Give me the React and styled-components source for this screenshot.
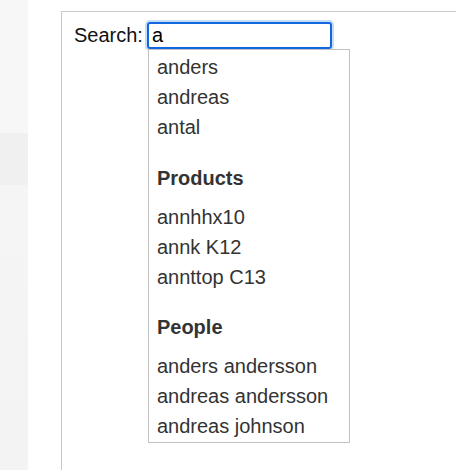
import React from "react";
import styled, { createGlobalStyle } from "styled-components";

const Global = createGlobalStyle`
  html, body { margin: 0; padding: 0; background: #fff; overflow: hidden; }
  body { font-family: "Liberation Sans", Arial, sans-serif; }
`;

const Page = styled.div`
  display: flex;
  width: 456px;
  height: 470px;
  overflow: hidden;
`;

const Sidebar = styled.div`
  width: 28px;
  flex: none;
  display: flex;
  flex-direction: column;
  background: linear-gradient(#f8f8f8, #f4f4f4);
`;

const SideBlock = styled.div`
  height: ${(p) => p.$h}px;
  background: ${(p) => p.$bg};
  flex: ${(p) => (p.$grow ? 1 : "none")};
`;

const Content = styled.div`
  flex: 1;
  padding: 11px 0 0 33px;
`;

const Panel = styled.div`
  width: 480px;
  height: 500px;
  border: 1px solid #c8c8c8;
  box-sizing: border-box;
  padding: 10px 0 0 12px;
`;

const Row = styled.div`
  display: flex;
  align-items: center;
  height: 27px;
`;

const Label = styled.label`
  font-size: 20px;
  color: #111;
  margin-right: 4px;
`;

const Field = styled.div`
  position: relative;
`;

const Input = styled.div`
  width: 185px;
  height: 27px;
  box-sizing: border-box;
  border: 2px solid #1266e0;
  border-radius: 3px;
  box-shadow: 0 0 0 2px #c4def7;
  font-size: 20px;
  line-height: 23px;
  padding-left: 3px;
  color: #000;
`;

const Menu = styled.div`
  position: absolute;
  top: 27px;
  left: 1px;
  width: 202px;
  box-sizing: border-box;
  border: 1px solid #c2c2c2;
  background: #fff;
  padding: 2px 0 1px 8px;
  color: #333;
  font-size: 20px;
`;

const Item = styled.div`
  line-height: 30px;
  white-space: nowrap;
`;

const Header = styled.div`
  font-weight: bold;
  line-height: 30px;
  margin: 20.5px 0 9px;
`;

const groups = [
  { title: null, items: ["anders", "andreas", "antal"] },
  { title: "Products", items: ["annhhx10", "annk K12", "annttop C13"] },
  { title: "People", items: ["anders andersson", "andreas andersson", "andreas johnson"] },
];

export default function App() {
  return (
    <>
      <Global />
      <Page>
        <Sidebar>
          <SideBlock $h={133} $bg="#f7f7f7" />
          <SideBlock $h={52} $bg="#f0f0f0" />
          <SideBlock $grow $bg="linear-gradient(#f5f5f5, #f3f3f3)" />
        </Sidebar>
        <Content>
          <Panel>
            <Row>
              <Label>Search:</Label>
              <Field>
                <Input>a</Input>
                <Menu>
                  {groups.map((g, i) => (
                    <div key={i}>
                      {g.title && <Header>{g.title}</Header>}
                      {g.items.map((it) => (
                        <Item key={it}>{it}</Item>
                      ))}
                    </div>
                  ))}
                </Menu>
              </Field>
            </Row>
          </Panel>
        </Content>
      </Page>
    </>
  );
}
